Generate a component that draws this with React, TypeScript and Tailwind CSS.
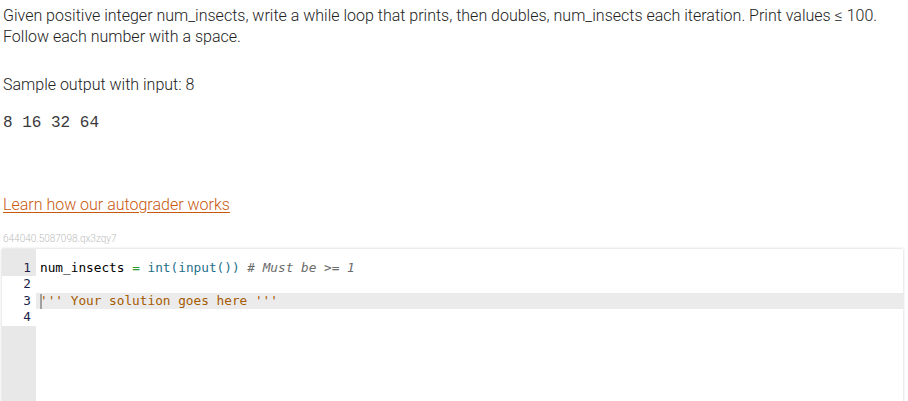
import React from "react";

const mono = "font-['DejaVu_Sans_Mono',monospace]";

export default function App() {
  return (
    <div className="w-[908px] h-[401px] overflow-hidden bg-white pl-[3px] pt-[5px] font-['Roboto',sans-serif] text-[#222]">
      <p className="text-[16px] leading-[21px] font-light pr-[20px]">
        Given positive integer num_insects, write a while loop that prints, then doubles, num_insects each iteration. Print values ≤ 100.
        <br />
        Follow each number with a space.
      </p>
      <p className="mt-[27px] text-[16px] leading-[21px] font-light">Sample output with input: 8</p>
      <pre className="mt-[18px] text-[16px] leading-[21px] font-['Liberation_Mono',monospace] text-[#3a3a3a]">8 16 32 64</pre>
      <a className="block mt-[60px] w-fit text-[16px] leading-[21px] font-light text-[#c8580e] underline underline-offset-[2px]" href="#">
        Learn how our autograder works
      </a>
      <div className="mt-[18px] text-[10px] leading-[12px] text-[#bdbdbd] font-light">644040.5087098.qx3zqy7</div>
      <div className="mt-[4px] ml-[-1px] mr-[5px] h-[200px] bg-white shadow-[0_0_3px_rgba(0,0,0,0.2)] flex">
        <div className={`w-[34px] shrink-0 flex flex-col ${mono} text-[12.75px] leading-[16.6px] text-[#1b1f4a]`}>
          <div className="bg-[#e8e8e8] pt-[10.7px] pr-[5px] text-right">1</div>
          <div className="bg-white pr-[5px] text-right">2</div>
          <div className="bg-white pr-[5px] text-right">3</div>
          <div className="bg-white pr-[5px] text-right">4</div>
          <div className="bg-[#e8e8e8] flex-1" />
        </div>
        <div className={`flex-1 pt-[10.7px] ${mono} text-[12.75px] leading-[16.6px] whitespace-pre`}>
          <div className="pl-[4px]">
            <span className="text-black">num_insects </span>
            <span className="text-[#2f9a2f]">=</span>
            <span className="text-black"> </span>
            <span className="text-[#1f6f8b]">int(input())</span>
            <span className="text-black"> </span>
            <span className="text-[#6b6b6b] italic"># Must be &gt;= 1</span>
          </div>
          <div className="pl-[4px]">&nbsp;</div>
          <div className="pl-[4px] bg-[#ebebeb] relative">
            <span className="absolute left-[4px] top-[1px] w-[2px] h-[15px] bg-[#a0a0a0]" />
            <span className="text-[#a65a00]">''' Your solution goes here '''</span>
          </div>
          <div className="pl-[4px]">&nbsp;</div>
        </div>
      </div>
    </div>
  );
}
